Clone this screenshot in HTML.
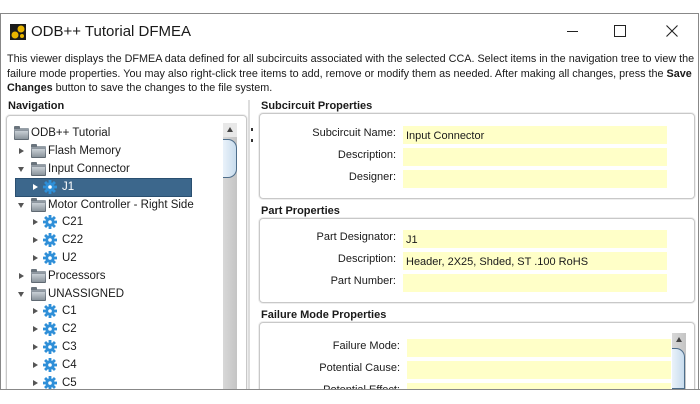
<!DOCTYPE html><html><head><style>
html,body{margin:0;width:700px;height:404px;overflow:hidden}
body{background:#fff;position:relative;font-family:"Liberation Sans",sans-serif;font-size:11px;color:#1a1a1a}
.a{position:absolute}
.win{left:0;top:13px;width:697px;height:375px;border:1px solid #888;background:#fff}
.row{position:absolute;height:18px;line-height:18px;white-space:nowrap;font-size:11.5px}
.tri{position:absolute;width:0;height:0;border-style:solid}
.tr{border-width:3.5px 0 3.5px 5px;border-color:transparent transparent transparent #555}
.td{border-width:5px 3.5px 0 3.5px;border-color:#555 transparent transparent transparent}
.fold{position:absolute;width:15px;height:12px;background:linear-gradient(#9aa3ab,#5d6770);border-radius:1px}
.fold:before{content:"";position:absolute;left:0;top:-2px;width:6px;height:3px;background:#6a747d;border-radius:1px 1px 0 0}
.fold:after{content:"";position:absolute;left:1px;top:3px;width:13px;height:8px;background:linear-gradient(#c9d0d6,#8a949c)}
.gear{position:absolute;width:14px;height:14px}
.lbl{position:absolute;text-align:right;width:200px;height:18px;line-height:18px}
.fld{position:absolute;height:18px;line-height:20px;background:#ffffc8;padding-left:3px;box-sizing:border-box}
.box{position:absolute;border:1px solid #c8c8c8;border-radius:4px;box-shadow:0 0 0 1px #eee}
.h{position:absolute;font-weight:bold}
</style></head><body>
<div class="a win"></div>
<svg class="a" style="left:10px;top:24px" width="16" height="16"><rect width="16" height="16" fill="#1a1a1a"/><circle cx="5" cy="11" r="3.5" fill="#e8b400"/><circle cx="11" cy="5" r="3.5" fill="#e8b400"/><circle cx="12" cy="12" r="2" fill="#e8b400"/></svg>
<div class="a" style="left:31px;top:23px;font-size:15px">ODB++ Tutorial DFMEA</div>
<div class="a" style="left:567px;top:31px;width:11px;height:1px;background:#222"></div>
<div class="a" style="left:614px;top:25px;width:10px;height:10px;border:1px solid #222"></div>
<svg class="a" style="left:666px;top:25px" width="12" height="12"><path d="M0.5 0.5L11.5 11.5M11.5 0.5L0.5 11.5" stroke="#222" stroke-width="1.1"/></svg>
<div class="a" style="left:7px;top:52px;line-height:14.5px;font-size:10.8px;white-space:nowrap">This viewer displays the DFMEA data defined for all subcircuits associated with the selected CCA. Select items in the navigation tree to view the<br>failure mode properties. You may also right-click tree items to add, remove or modify them as needed. After making all changes, press the <b>Save</b><br><b>Changes</b> button to save the changes to the file system.</div>
<div class="h" style="left:8px;top:100px">Navigation</div>
<div class="box" style="left:6px;top:115px;width:239px;height:280px"></div>
<div class="a" style="left:223px;top:123px;width:14px;height:266px;background:linear-gradient(90deg,#d8d8d8,#c4c4c4)"></div>
<div class="a" style="left:223px;top:123px;width:14px;height:14px;background:#e8e8e8"></div>
<div class="tri" style="left:227px;top:127px;border-width:0 3.5px 5px 3.5px;border-color:transparent transparent #444 transparent"></div>
<div class="a" style="left:223px;top:139px;width:13px;height:37px;background:linear-gradient(90deg,#eaf2fa,#c8dced);border:1px solid #4d6d8a;border-radius:0 9px 9px 0;border-left:none"></div>
<div class="a" style="left:248px;top:100px;width:2px;height:289px;background:#ddd"></div>
<div class="a" style="left:251px;top:128px;width:2px;height:3px;background:#333"></div>
<div class="a" style="left:251px;top:139px;width:2px;height:3px;background:#333"></div>
<div class="a" style="left:15px;top:178px;width:175px;height:17px;background:#3c678c;border:1px solid #2a4f70"></div>
<div id="tree"></div>
<script>
var rows=[[0,'f','','ODB++ Tutorial',124],[1,'f','r','Flash Memory',142],[1,'f','d','Input Connector',160],[2,'g','r','J1',178,1],[1,'f','d','Motor Controller - Right Side',196],[2,'g','r','C21',213],[2,'g','r','C22',231],[2,'g','r','U2',249],[1,'f','r','Processors',267],[1,'f','d','UNASSIGNED',285],[2,'g','r','C1',302],[2,'g','r','C2',320],[2,'g','r','C3',338],[2,'g','r','C4',356],[2,'g','r','C5',374]];
var h='';var gear='<svg width="14" height="14" viewBox="0 0 14 14"><g fill="#2f8fd8"><circle cx="7" cy="7" r="4.6"/><rect x="5.6" y="0" width="2.8" height="14"/><rect x="0" y="5.6" width="14" height="2.8"/><rect x="5.6" y="0" width="2.8" height="14" transform="rotate(45 7 7)"/><rect x="5.6" y="0" width="2.8" height="14" transform="rotate(-45 7 7)"/></g><circle cx="7" cy="7" r="1.8" fill="#fff"/></svg>';
rows.forEach(function(r){var x=[14,31,45][r[0]];var y=r[4];var sel=r[5];
if(r[2]=='r')h+='<div class="tri tr" style="left:'+(x-12)+'px;top:'+(y+6)+'px;'+(sel?'border-left-color:#fff':'')+'"></div>';
if(r[2]=='d')h+='<div class="tri td" style="left:'+(x-13)+'px;top:'+(y+7)+'px"></div>';
if(r[1]=='f')h+='<div class="fold" style="left:'+x+'px;top:'+(y+4)+'px"></div>';else h+='<div class="gear" style="left:'+(x-2)+'px;top:'+(y+2)+'px">'+gear+'</div>';
h+='<div class="row" style="left:'+(x+17)+'px;top:'+y+'px;'+(sel?'color:#fff':'')+'">'+r[3]+'</div>';});
document.getElementById('tree').innerHTML=h;
</script>
<div class="h" style="left:261px;top:100px">Subcircuit Properties</div>
<div class="box" style="left:259px;top:113px;width:434px;height:84px"></div>
<div class="lbl" style="left:196px;top:124px">Subcircuit Name:</div><div class="fld" style="left:403px;top:126px;width:264px">Input Connector</div>
<div class="lbl" style="left:196px;top:146px">Description:</div><div class="fld" style="left:403px;top:148px;width:264px"></div>
<div class="lbl" style="left:196px;top:168px">Designer:</div><div class="fld" style="left:403px;top:170px;width:264px"></div>
<div class="h" style="left:261px;top:205px">Part Properties</div>
<div class="box" style="left:259px;top:218px;width:434px;height:83px"></div>
<div class="lbl" style="left:196px;top:228px">Part Designator:</div><div class="fld" style="left:403px;top:230px;width:264px">J1</div>
<div class="lbl" style="left:196px;top:250px">Description:</div><div class="fld" style="left:403px;top:252px;width:264px">Header, 2X25, Shded, ST .100 RoHS</div>
<div class="lbl" style="left:196px;top:272px">Part Number:</div><div class="fld" style="left:403px;top:274px;width:264px"></div>
<div class="h" style="left:261px;top:309px">Failure Mode Properties</div>
<div class="box" style="left:259px;top:322px;width:434px;height:72px"></div>
<div class="lbl" style="left:200px;top:337px">Failure Mode:</div><div class="fld" style="left:407px;top:339px;width:264px"></div>
<div class="lbl" style="left:200px;top:359px">Potential Cause:</div><div class="fld" style="left:407px;top:361px;width:264px"></div>
<div class="lbl" style="left:200px;top:381px">Potential Effect:</div><div class="fld" style="left:407px;top:383px;width:264px;height:6px"></div>
<div class="a" style="left:672px;top:333px;width:14px;height:56px;background:linear-gradient(90deg,#d8d8d8,#c4c4c4)"></div>
<div class="tri" style="left:676px;top:337px;border-width:0 3.5px 5px 3.5px;border-color:transparent transparent #444 transparent"></div>
<div class="a" style="left:672px;top:348px;width:13px;height:41px;background:linear-gradient(90deg,#eaf2fa,#c8dced);border:1px solid #4d6d8a;border-radius:0 9px 0 0;border-left:none;box-sizing:border-box"></div>
<div class="a" style="left:0;top:389px;width:700px;height:14px;background:#fff;border-top:1px solid #888;z-index:10"></div>
</body></html>
